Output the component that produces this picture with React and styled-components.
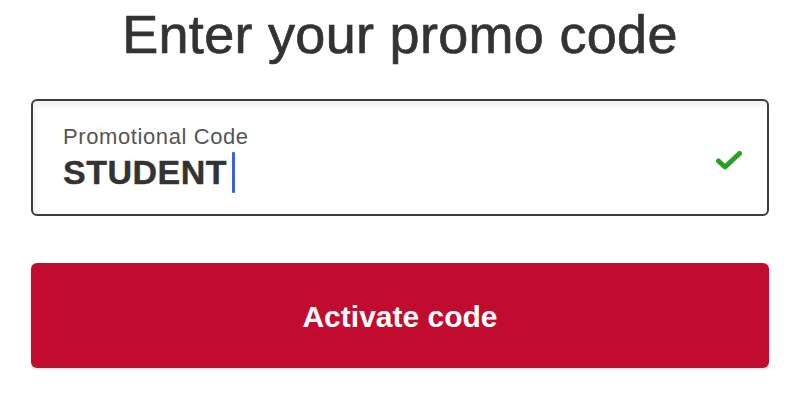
import React from "react";
import styled, { createGlobalStyle } from "styled-components";

const Global = createGlobalStyle`
  html, body { margin: 0; padding: 0; background: #ffffff; }
  body { font-family: "Liberation Sans", Arial, Helvetica, sans-serif; }
  * { box-sizing: border-box; }
`;

const Page = styled.div`
  width: 800px;
  height: 400px;
  padding: 4px 31px 0;
  display: flex;
  flex-direction: column;
  background: #fff;
`;

const Title = styled.h1`
  margin: 0;
  font-size: 54px;
  line-height: 60px;
  font-weight: 400;
  color: #333333;
  -webkit-text-stroke: 0.7px #333333;
  text-align: center;
  letter-spacing: 0.3px;
`;

const Field = styled.div`
  margin-top: 35px;
  height: 117px;
  border: 2px solid #3d3d3d;
  border-radius: 6px;
  box-shadow: inset 3px 5px 5px rgba(0, 0, 0, 0.05);
  display: flex;
  align-items: center;
  padding: 0 24px 0 30px;
`;

const FieldBody = styled.div`
  flex: 1;
  display: flex;
  flex-direction: column;
  gap: 3px;
  padding-top: 2px;
`;

const Label = styled.label`
  font-size: 22px;
  line-height: 24px;
  color: #555555;
  letter-spacing: 0.6px;
`;

const ValueRow = styled.div`
  display: flex;
  align-items: center;
  height: 41px;
`;

const Value = styled.span`
  font-size: 34px;
  line-height: 41px;
  font-weight: 700;
  color: #333333;
  -webkit-text-stroke: 0.4px #333333;
  letter-spacing: 0.5px;
`;

const Caret = styled.span`
  display: inline-block;
  width: 3px;
  height: 41px;
  margin-left: 5px;
  border-radius: 1px;
  background: #3f5fe0;
`;

const Check = styled.svg`
  width: 28px;
  height: 22px;
  flex: none;
  margin-top: 4px;
`;

const Button = styled.button`
  margin-top: 47px;
  height: 105px;
  width: 100%;
  border: none;
  border-radius: 6px;
  background: #c20c2f;
  box-shadow: 0 1px 3px rgba(0, 0, 0, 0.15);
  color: #ffffff;
  font-family: "Liberation Sans", Arial, Helvetica, sans-serif;
  font-size: 30px;
  font-weight: 700;
  display: flex;
  align-items: center;
  justify-content: center;
  padding: 2px 0 0;
  cursor: pointer;
`;

export default function App() {
  return (
    <>
      <Global />
      <Page>
        <Title>Enter your promo code</Title>
        <Field>
          <FieldBody>
            <Label>Promotional Code</Label>
            <ValueRow>
              <Value>STUDENT</Value>
              <Caret />
            </ValueRow>
          </FieldBody>
          <Check viewBox="0 0 28 22">
            <path
              d="M3.5 12 L10 18 L24.5 4.5"
              fill="none"
              stroke="#28a028"
              strokeWidth="5"
              strokeLinecap="round"
              strokeLinejoin="round"
            />
          </Check>
        </Field>
        <Button>Activate code</Button>
      </Page>
    </>
  );
}
